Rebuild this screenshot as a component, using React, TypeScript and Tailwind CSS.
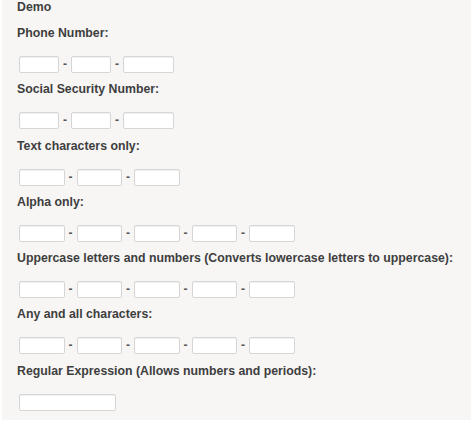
import React from "react";

const Dash = () => (
  <span className="w-[12px] text-center text-[12px] leading-[17px] text-[#555]">-</span>
);

const Field = ({ w }: { w: number }) => {
  const cls =
    w === 40
      ? "w-[40px]"
      : w === 51
      ? "w-[51px]"
      : w === 46
      ? "w-[45.5px]"
      : "w-[97px]";
  return (
    <input
      type="text"
      className={`${cls} h-[17px] bg-white border border-[#d6d6d6] rounded-[2px] shadow-[inset_0_1px_1px_rgba(0,0,0,0.06)] outline-none`}
    />
  );
};

const Row = ({ widths }: { widths: number[] }) => (
  <div className="flex items-center ml-[2px] h-[17px]">
    {widths.map((w, i) => (
      <React.Fragment key={i}>
        {i > 0 && <Dash />}
        <Field w={w} />
      </React.Fragment>
    ))}
  </div>
);

const Section = ({ label, widths }: { label: string; widths: number[] }) => (
  <div className="flex flex-col">
    <div className="h-[14px] leading-[14px] whitespace-nowrap">{label}</div>
    <div className="h-[16px]" />
    <Row widths={widths} />
    <div className="h-[9.3px]" />
  </div>
);

export default function App() {
  return (
    <div className="w-[474px] h-[424px] bg-white overflow-hidden">
      <div
        className="ml-[2px] w-[469px] h-[420px] bg-[#f7f6f5] pl-[15px] text-[12.3px] font-bold text-[#3e3e3e]"
        style={{ fontFamily: '"Liberation Sans", Arial, sans-serif' }}
      >
        <div className="h-[14px] leading-[14px] pt-0">Demo</div>
        <div className="h-[12px]" />
        <Section label="Phone Number:" widths={[40, 40, 51]} />
        <Section label="Social Security Number:" widths={[40, 40, 51]} />
        <Section label="Text characters only:" widths={[46, 46, 46]} />
        <Section label="Alpha only:" widths={[46, 46, 46, 46, 46]} />
        <Section
          label="Uppercase letters and numbers (Converts lowercase letters to uppercase):"
          widths={[46, 46, 46, 46, 46]}
        />
        <Section label="Any and all characters:" widths={[46, 46, 46, 46, 46]} />
        <Section label="Regular Expression (Allows numbers and periods):" widths={[97]} />
      </div>
    </div>
  );
}
